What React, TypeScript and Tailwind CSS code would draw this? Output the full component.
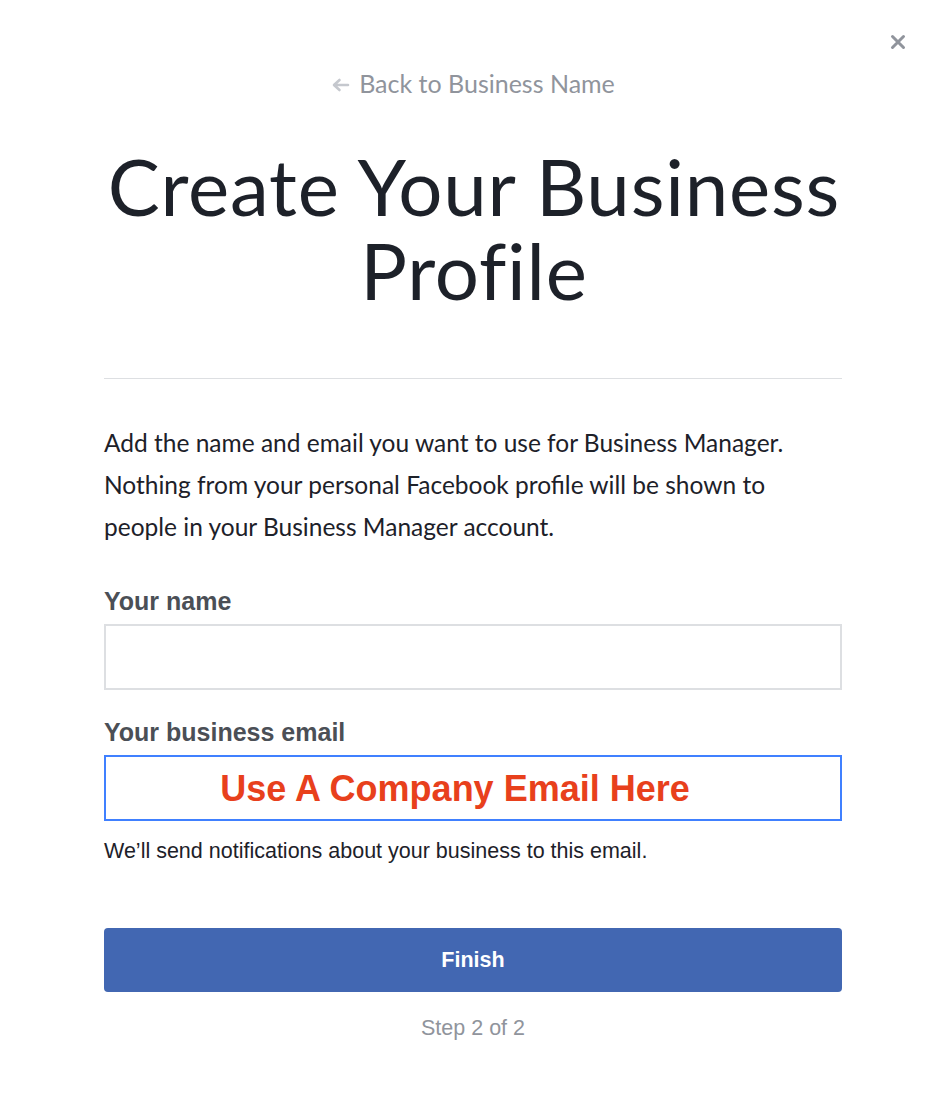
import React from "react";

export default function App() {
  return (
    <div className="relative w-[948px] h-[1106px] bg-white" style={{ fontFamily: "Lato, 'Open Sans', sans-serif" }}>
      <button className="absolute right-[42px] top-[34px] text-[#90949c]">
        <svg width="16" height="16" viewBox="0 0 16 16">
          <path d="M2.5 2.5 L13.5 13.5 M13.5 2.5 L2.5 13.5" stroke="#90949c" strokeWidth="3" strokeLinecap="round" />
        </svg>
      </button>
      <div className="flex flex-col items-center pt-[66px]">
        <div className="flex items-center gap-[9px] text-[25px] leading-[34px] text-[#90949c] pr-[2px]">
          <svg width="19" height="16" viewBox="0 0 19 16" className="mt-[4px]">
            <path d="M17 8 H3.5 M8.5 3 L3 8 L8.5 13" stroke="#c5c8ce" strokeWidth="2.6" fill="none" strokeLinecap="round" strokeLinejoin="round" />
          </svg>
          <span>Back to Business Name</span>
        </div>
        <h1 className="mt-[44px] flex flex-col items-center text-center text-[78px] text-[#1d2129] font-normal tracking-[0.8px]">
          <span className="block leading-[84px]">Create Your Business</span>
          <span className="block leading-[84px]">Profile</span>
        </h1>
      </div>
      <div className="mx-[104px] w-[738px]">
        <div className="mt-[66px] h-px bg-[#dddfe2]" />
        <p className="mt-[43px] text-[24.5px] leading-[42px] text-[#1d2129] whitespace-nowrap">
          Add the name and email you want to use for Business Manager.
          <br />
          Nothing from your personal Facebook profile will be shown to
          <br />
          people in your Business Manager account.
        </p>
        <div style={{ fontFamily: "'Liberation Sans', Arial, sans-serif" }}>
          <div className="mt-[38px] text-[25px] leading-[30px] font-bold text-[#4b4f56]">Your name</div>
          <div className="mt-[8px] h-[66px] border-2 border-[#dddfe2] bg-white" />
          <div className="mt-[27px] text-[25px] leading-[30px] font-bold text-[#4b4f56]">Your business email</div>
          <div className="mt-[8px] h-[66px] border-2 border-[#4080ff] bg-white flex items-center justify-center pr-[36px]">
            <span className="text-[36px] font-bold text-[#e8401c] mt-[2px]">Use A Company Email Here</span>
          </div>
          <div className="mt-[16px] text-[21.5px] leading-[28px] text-[#1d2129]">
            We’ll send notifications about your business to this email.
          </div>
          <button className="mt-[63px] w-full h-[64px] rounded-[4px] bg-[#4267b2] text-white text-[21.5px] font-bold">
            Finish
          </button>
          <div className="mt-[22px] text-center text-[21.5px] leading-[28px] text-[#90949c]">Step 2 of 2</div>
        </div>
      </div>
    </div>
  );
}
